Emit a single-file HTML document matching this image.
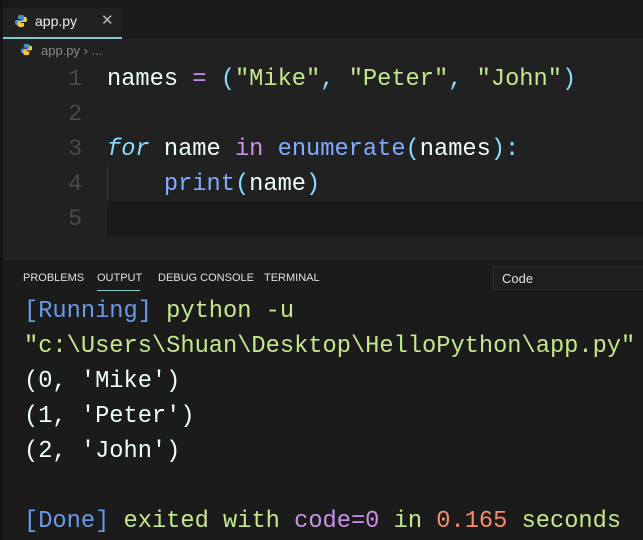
<!DOCTYPE html>
<html><head><style>
*{margin:0;padding:0;box-sizing:border-box}
body{width:643px;height:540px;overflow:hidden;background:#1b1b1b;position:relative;font-family:"Liberation Mono",monospace}
.abs{position:absolute}
.mono{font-family:"Liberation Mono",monospace;white-space:pre}
.sans{font-family:"Liberation Sans",sans-serif}
.ln{position:absolute;left:40px;width:42px;text-align:right;color:#4a4a4a;font-size:23px;line-height:35px}
.cl{position:absolute;left:107px;font-size:23.7px;line-height:35px;color:#eeffff}
.ol{position:absolute;left:24px;font-size:23.7px;line-height:35px;color:#eeffff}
.p{color:#c792ea}.c{color:#89ddff}.g{color:#c3e88d}.b{color:#82aaff}.o{color:#f78c6c}.r{color:#6a9ae8}
</style></head><body>
<div class="abs" style="left:0;top:0;width:643px;height:8px;background:#181818"></div>
<div class="abs" style="left:0;top:8px;width:643px;height:30px;background:#1b1b1b"></div>
<div class="abs" style="left:0;top:0;width:3px;height:540px;background:#141414;z-index:5"></div>
<div class="abs" style="left:3px;top:8px;width:119px;height:31px;background:#212121;border-bottom:2px solid #80cbc4"></div>
<svg class="abs" style="left:14px;top:14px" width="14" height="14" viewBox="0 0 14 14"><path d="M7 1C4 1 4 2 4 3v2h3v1H2.5C1 6 1 7.5 1 8s0 3 1.5 3H4V9c0-1 1-2 2-2h3c1 0 1.5-.5 1.5-1.5V3C10.5 1.5 9 1 7 1z" fill="#4a8cc8"/><path d="M7 13c3 0 3-1 3-2V9H7V8h4.5C13 8 13 6.5 13 6s0-3-1.5-3H10v2c0 1-1 2-2 2H5c-1 0-1.5.5-1.5 1.5V11C3.5 12.5 5 13 7 13z" fill="#f5cc3a"/></svg>
<div class="abs sans" style="left:35px;top:13px;font-size:14px;color:#eeeeee">app.py</div>
<div class="abs sans" style="left:101px;top:11px;font-size:15px;color:#bbb">✕</div>
<div class="abs" style="left:0;top:39px;width:643px;height:221px;background:#212121"></div>
<svg class="abs" style="left:20px;top:43px" width="13" height="13" viewBox="0 0 14 14"><path d="M7 1C4 1 4 2 4 3v2h3v1H2.5C1 6 1 7.5 1 8s0 3 1.5 3H4V9c0-1 1-2 2-2h3c1 0 1.5-.5 1.5-1.5V3C10.5 1.5 9 1 7 1z" fill="#4a8cc8"/><path d="M7 13c3 0 3-1 3-2V9H7V8h4.5C13 8 13 6.5 13 6s0-3-1.5-3H10v2c0 1-1 2-2 2H5c-1 0-1.5.5-1.5 1.5V11C3.5 12.5 5 13 7 13z" fill="#f5cc3a"/></svg>
<div class="abs sans" style="left:41px;top:43px;font-size:13px;color:#8a8a8a">app.py › ...</div>
<div class="abs" style="left:107px;top:201px;width:536px;height:35px;background:#1a1a1a"></div>
<div class="abs" style="left:107px;top:166px;width:1px;height:35px;background:#3a3a3a"></div>
<div class="ln mono" style="top:62px">1</div>
<div class="ln mono" style="top:97px">2</div>
<div class="ln mono" style="top:132px">3</div>
<div class="ln mono" style="top:167px">4</div>
<div class="ln mono" style="top:202px">5</div>
<div class="cl mono" style="top:62px">names <span class="p">=</span> <span class="c">(</span><span class="g">"Mike"</span><span class="c">,</span> <span class="g">"Peter"</span><span class="c">,</span> <span class="g">"John"</span><span class="c">)</span></div>
<div class="cl mono" style="top:132px"><i class="c">for</i> name <span class="p">in</span> <span class="b">enumerate</span><span class="c">(</span>names<span class="c">):</span></div>
<div class="cl mono" style="top:167px">    <span class="b">print</span><span class="c">(</span>name<span class="c">)</span></div>
<div class="abs" style="left:0;top:259px;width:643px;height:1px;background:#2a2a2a"></div>
<div class="abs sans" style="left:23px;top:272px;font-size:11px;color:#e0e0e0;white-space:pre">PROBLEMS</div>
<div class="abs sans" style="left:97px;top:272px;font-size:11px;color:#e0e0e0">OUTPUT</div>
<div class="abs" style="left:97px;top:290px;width:43px;height:1px;background:#80cbc4"></div>
<div class="abs sans" style="left:158px;top:272px;font-size:11px;color:#e0e0e0">DEBUG CONSOLE</div>
<div class="abs sans" style="left:264px;top:272px;font-size:11px;color:#e0e0e0">TERMINAL</div>
<div class="abs" style="left:493px;top:266px;width:152px;height:24px;background:#1e1e1e;border:1px solid #2c2c2c"></div>
<div class="abs sans" style="left:502px;top:271px;font-size:13px;color:#e0e0e0">Code</div>
<div class="ol mono" style="top:294px"><span class="r">[Running]</span> <span class="g">python -u</span></div>
<div class="ol mono" style="top:329px"><span class="g">"c:\Users\Shuan\Desktop\HelloPython\app.py"</span></div>
<div class="ol mono" style="top:364px">(0, 'Mike')</div>
<div class="ol mono" style="top:399px">(1, 'Peter')</div>
<div class="ol mono" style="top:434px">(2, 'John')</div>
<div class="ol mono" style="top:504px"><span class="r">[Done]</span> <span class="g">exited with</span> <span class="p">code=0</span> <span class="g">in</span> <span class="o">0.165</span> <span class="g">seconds</span></div>
</body></html>
